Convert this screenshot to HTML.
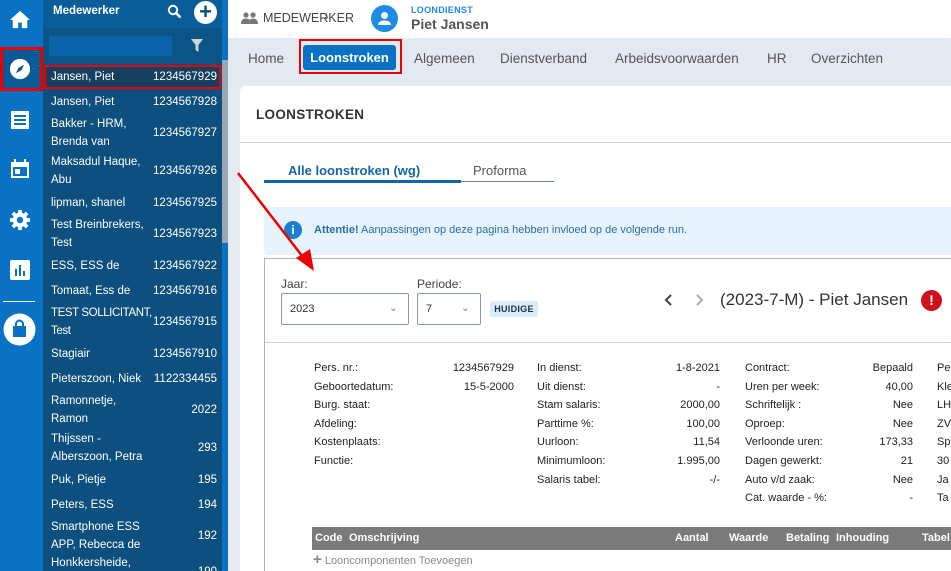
<!DOCTYPE html>
<html><head><meta charset="utf-8"><style>
*{margin:0;padding:0;box-sizing:border-box}
html,body{width:951px;height:571px;overflow:hidden}
body{position:relative;background:#e4ebf2;font-family:"Liberation Sans",sans-serif}
.abs{position:absolute}
#icons{left:0;top:0;width:43px;height:571px;background:#0a72c4}
#list{left:43px;top:0;width:179px;height:571px;background:#0d4f7e;color:#fff;font-size:11.5px}
.nm{position:absolute;left:8px;line-height:18px;white-space:nowrap}
.nr{position:absolute;right:5px;line-height:18px}
#scroll{left:222px;top:0;width:6px;height:571px;background:#0a72c4}
.dl{position:absolute;font-size:11px;color:#222}
.nav{position:absolute;top:51px;font-size:13.5px;color:#555}
</style></head><body>
<div id="icons" class="abs">
 <div class="abs" style="left:0;top:48px;width:43px;height:42px;background:#0b5a98"></div>
 <svg class="abs" style="left:9px;top:9px" width="22" height="20" viewBox="0 0 24 22"><path d="M12 2L1 12h3v9h6v-6h4v6h6v-9h3z" fill="#fff"/></svg>
 <svg class="abs" style="left:9px;top:58px" width="22" height="22" viewBox="0 0 24 24"><circle cx="12" cy="12" r="11" fill="#fff"/><path d="M16.5 7.5l-3 6-6 3 3-6z" fill="#0b5a98"/></svg>
 <svg class="abs" style="left:10px;top:110px" width="20" height="20" viewBox="0 0 20 20"><rect x="1" y="1" width="18" height="18" fill="#fff"/><rect x="4" y="5" width="12" height="2" fill="#0a72c4"/><rect x="4" y="9" width="12" height="2" fill="#0a72c4"/><rect x="4" y="13" width="12" height="2" fill="#0a72c4"/></svg>
 <svg class="abs" style="left:10px;top:159px" width="20" height="20" viewBox="0 0 20 20"><rect x="1" y="3" width="18" height="16" fill="#fff"/><rect x="4" y="0" width="2" height="4" fill="#fff"/><rect x="14" y="0" width="2" height="4" fill="#fff"/><rect x="3" y="8" width="14" height="9" fill="#0a72c4"/><rect x="5" y="10" width="5" height="5" fill="#fff"/></svg>
 <svg class="abs" style="left:9px;top:209px" width="22" height="22" viewBox="0 0 24 24"><circle cx="12" cy="12" r="8" fill="#fff"/><g fill="#fff"><rect x="10" y="1" width="4" height="22"/><rect x="1" y="10" width="22" height="4"/><rect x="10" y="1" width="4" height="22" transform="rotate(45 12 12)"/><rect x="10" y="1" width="4" height="22" transform="rotate(-45 12 12)"/></g><circle cx="12" cy="12" r="3.5" fill="#0a72c4"/></svg>
 <svg class="abs" style="left:10px;top:260px" width="20" height="20" viewBox="0 0 20 20"><rect x="0" y="0" width="20" height="20" rx="2" fill="#fff"/><rect x="5" y="9" width="2" height="7" fill="#0a72c4"/><rect x="9" y="5" width="2" height="11" fill="#0a72c4"/><rect x="13" y="11" width="2" height="5" fill="#0a72c4"/></svg>
 <div class="abs" style="left:3px;top:301px;width:32px;height:1px;background:#fff"></div>
 <svg class="abs" style="left:3px;top:313px" width="33" height="33" viewBox="0 0 33 33"><circle cx="16.5" cy="16.5" r="16" fill="#fff"/><path d="M10 13h13v11H10z" fill="#0a72c4"/><path d="M13 13v-2a3.5 3.5 0 0 1 7 0v2" stroke="#0a72c4" stroke-width="2" fill="none"/></svg>
 <div class="abs" style="left:0;top:47px;width:43px;height:44px;border:3px solid #e00"></div>
</div>
<div id="list" class="abs">
 <div class="abs" style="left:0;top:0;width:179px;height:28px;background:#0b5d9a"></div>
 <div class="abs" style="left:0;top:28px;width:179px;height:36px;background:#0b5586"></div>
 <div class="abs" style="left:10px;top:5px;font-weight:bold;font-size:11.5px">Medewerker</div>
 <svg class="abs" style="left:124px;top:4px" width="15" height="15" viewBox="0 0 15 15"><circle cx="6" cy="6" r="4.2" stroke="#fff" stroke-width="2" fill="none"/><path d="M9 9l4.5 4.5" stroke="#fff" stroke-width="2.5"/></svg>
 <div class="abs" style="left:151px;top:1px;width:23px;height:23px;border-radius:50%;background:#fff;color:#0b4f7e;font-size:22px;line-height:22px;text-align:center;font-weight:bold">+</div>
 <div class="abs" style="left:6px;top:36px;width:123px;height:20px;background:#0a62a8"></div>
 <svg class="abs" style="left:148px;top:39px" width="12" height="13" viewBox="0 0 12 13"><path d="M0 0h12L7.5 6v7L4.5 11V6z" fill="#c8d4de"/></svg>
 <div class="abs" style="left:1px;top:65px;width:177px;height:24px;background:#173f5f;border:2px solid #e00"></div>
 <div class="nm" style="top:68px">Jansen, Piet</div><div class="nr" style="top:68px">1234567929</div>
 <div class="nm" style="top:93px">Jansen, Piet</div><div class="nr" style="top:93px">1234567928</div>
 <div class="nm" style="top:115px">Bakker - HRM,<br>Brenda van</div><div class="nr" style="top:124px">1234567927</div>
 <div class="nm" style="top:153px">Maksadul Haque,<br>Abu</div><div class="nr" style="top:162px">1234567926</div>
 <div class="nm" style="top:194px">lipman, shanel</div><div class="nr" style="top:194px">1234567925</div>
 <div class="nm" style="top:216px">Test Breinbrekers,<br>Test</div><div class="nr" style="top:225px">1234567923</div>
 <div class="nm" style="top:257px">ESS, ESS de</div><div class="nr" style="top:257px">1234567922</div>
 <div class="nm" style="top:282px">Tomaat, Ess de</div><div class="nr" style="top:282px">1234567916</div>
 <div class="nm" style="top:304px;letter-spacing:-0.4px">TEST SOLLICITANT,<br>Test</div><div class="nr" style="top:313px">1234567915</div>
 <div class="nm" style="top:345px">Stagiair</div><div class="nr" style="top:345px">1234567910</div>
 <div class="nm" style="top:370px">Pieterszoon, Niek</div><div class="nr" style="top:370px">1122334455</div>
 <div class="nm" style="top:392px">Ramonnetje,<br>Ramon</div><div class="nr" style="top:401px">2022</div>
 <div class="nm" style="top:430px">Thijssen -<br>Alberszoon, Petra</div><div class="nr" style="top:439px">293</div>
 <div class="nm" style="top:471px">Puk, Pietje</div><div class="nr" style="top:471px">195</div>
 <div class="nm" style="top:496px">Peters, ESS</div><div class="nr" style="top:496px">194</div>
 <div class="nm" style="top:518px">Smartphone ESS<br>APP, Rebecca de</div><div class="nr" style="top:527px">192</div>
 <div class="nm" style="top:554px">Honkkersheide,</div><div class="nr" style="top:563px">190</div>
</div>
<div id="scroll" class="abs"><div class="abs" style="left:0;top:60px;width:6px;height:183px;background:#9aa8b6"></div></div>

<div class="abs" style="left:228px;top:0;width:723px;height:38px;background:#fff"></div>
<svg class="abs" style="left:241px;top:12px" width="18" height="12" viewBox="0 0 18 12"><circle cx="5" cy="3" r="2.6" fill="#777"/><circle cx="12" cy="3" r="2.6" fill="#777"/><path d="M0 12c0-4 2-5.5 5-5.5s5 1.5 5 5.5zM8 12c0-4 1.5-5.5 4-5.5s5 1.5 5 5.5z" fill="#777"/></svg>
<div class="abs" style="left:263px;top:11px;font-size:12.5px;color:#444">MEDEWERKER</div>
<div class="abs" style="left:324px;top:8px;font-size:14px;color:#666">›</div>
<svg class="abs" style="left:371px;top:5px" width="27" height="27" viewBox="0 0 27 27"><circle cx="13.5" cy="13.5" r="13.5" fill="#1e8be6"/><circle cx="13.5" cy="10.5" r="3.5" fill="#fff"/><path d="M7 20c0-3 3-4.5 6.5-4.5S20 17 20 20z" fill="#fff"/></svg>
<div class="abs" style="left:411px;top:5px;font-size:9px;color:#1e8be6;font-weight:bold;letter-spacing:.3px">LOONDIENST</div>
<div class="abs" style="left:411px;top:16px;font-size:14px;color:#555;font-weight:bold">Piet Jansen</div>

<div class="abs" style="left:228px;top:38px;width:723px;height:48px;background:#e2e9f0"></div>
<div class="nav" style="left:248px">Home</div>
<div class="abs" style="left:299px;top:39px;width:103px;height:35px;border:2px solid #e00"></div>
<div class="abs" style="left:303px;top:45px;width:93px;height:25px;background:#0a72c4;border-radius:3px;color:#fff;font-size:13px;font-weight:bold;text-align:center;line-height:25px">Loonstroken</div>
<div class="nav" style="left:414px">Algemeen</div>
<div class="nav" style="left:500px">Dienstverband</div>
<div class="nav" style="left:615px">Arbeidsvoorwaarden</div>
<div class="nav" style="left:767px">HR</div>
<div class="nav" style="left:811px">Overzichten</div>

<div class="abs" style="left:240px;top:86px;width:711px;height:485px;background:#fff;border-radius:6px 0 0 0"></div>
<div class="abs" style="left:256px;top:107px;font-size:13.5px;font-weight:bold;color:#333;letter-spacing:.3px">LOONSTROKEN</div>
<div class="abs" style="left:240px;top:142px;width:711px;height:1px;background:#c8d2dc"></div>
<div class="abs" style="left:288px;top:163px;font-size:13px;font-weight:bold;color:#1565a8">Alle loonstroken (wg)</div>
<div class="abs" style="left:473px;top:163px;font-size:13px;color:#555">Proforma</div>
<div class="abs" style="left:264px;top:181px;width:290px;height:1px;background:#6b8599"></div>
<div class="abs" style="left:264px;top:180px;width:197px;height:3px;background:#1565a8"></div>

<div class="abs" style="left:264px;top:207px;width:687px;height:48px;background:#e6f3fc;border-radius:4px 0 0 4px"></div>
<div class="abs" style="left:284px;top:221px;width:18px;height:18px;border-radius:50%;background:#1a7fd0;color:#fff;font-size:12px;font-weight:bold;text-align:center;line-height:18px">i</div>
<div class="abs" style="left:314px;top:224px;font-size:11px;color:#2a6ea8"><b>Attentie!</b> Aanpassingen op deze pagina hebben invloed op de volgende run.</div>

<div class="abs" style="left:264px;top:258px;width:690px;height:320px;border:1px solid #a7b3c0"></div>
<div class="abs" style="left:281px;top:277px;font-size:12px;color:#444">Jaar:</div>
<div class="abs" style="left:417px;top:277px;font-size:12px;color:#444">Periode:</div>
<div class="abs" style="left:281px;top:293px;width:128px;height:32px;border:1px solid #8a98a8;border-radius:2px;font-size:11px;color:#333;padding:9px 0 0 8px">2023<span style="position:absolute;right:10px;top:7px;color:#888">⌄</span></div>
<div class="abs" style="left:417px;top:293px;width:64px;height:32px;border:1px solid #8a98a8;border-radius:2px;font-size:11px;color:#333;padding:9px 0 0 8px">7<span style="position:absolute;right:10px;top:7px;color:#888">⌄</span></div>
<div class="abs" style="left:490px;top:301px;width:48px;height:16px;background:#d9ecf9;border-radius:2px;font-size:9px;font-weight:bold;color:#234;text-align:center;line-height:16px;letter-spacing:.3px">HUIDIGE</div>
<svg class="abs" style="left:663px;top:293px" width="10" height="14" viewBox="0 0 10 14"><path d="M8 2L3 7l5 5" stroke="#444" stroke-width="2" fill="none"/></svg>
<svg class="abs" style="left:695px;top:293px" width="10" height="14" viewBox="0 0 10 14"><path d="M2 2l5 5-5 5" stroke="#aab" stroke-width="2" fill="none"/></svg>
<div class="abs" style="left:720px;top:290px;font-size:17px;color:#333">(2023-7-M) - Piet Jansen</div>
<div class="abs" style="left:921px;top:290px;width:21px;height:21px;border-radius:50%;background:#d0101e;color:#fff;font-size:14px;font-weight:bold;text-align:center;line-height:21px">!</div>
<div class="abs" style="left:265px;top:342px;width:688px;height:1px;background:#c8d2dc"></div>

<div class="dl" style="left:314px;top:359px;line-height:18.6px">Pers. nr.:<br>Geboortedatum:<br>Burg. staat:<br>Afdeling:<br>Kostenplaats:<br>Functie:</div>
<div class="dl" style="left:414px;width:100px;text-align:right;top:359px;line-height:18.6px">1234567929<br>15-5-2000</div>
<div class="dl" style="left:537px;top:359px;line-height:18.6px">In dienst:<br>Uit dienst:<br>Stam salaris:<br>Parttime %:<br>Uurloon:<br>Minimumloon:<br>Salaris tabel:</div>
<div class="dl" style="left:620px;width:100px;text-align:right;top:359px;line-height:18.6px">1-8-2021<br>-<br>2000,00<br>100,00<br>11,54<br>1.995,00<br>-/-</div>
<div class="dl" style="left:745px;top:359px;line-height:18.6px">Contract:<br>Uren per week:<br>Schriftelijk :<br>Oproep:<br>Verloonde uren:<br>Dagen gewerkt:<br>Auto v/d zaak:<br>Cat. waarde - %:</div>
<div class="dl" style="left:813px;width:100px;text-align:right;top:359px;line-height:18.6px">Bepaald<br>40,00<br>Nee<br>Nee<br>173,33<br>21<br>Nee<br>-</div>
<div class="dl" style="left:937px;top:359px;line-height:18.6px">Pe<br>Kle<br>LH<br>ZV<br>Sp<br>30<br>Ja<br>Ta</div>

<div class="abs" style="left:312px;top:527px;width:639px;height:23px;background:#7a7a7a;color:#fff;font-size:11px;font-weight:bold;line-height:23px">
 <span class="abs" style="left:3px">Code</span><span class="abs" style="left:37px">Omschrijving</span><span class="abs" style="left:363px">Aantal</span><span class="abs" style="left:417px">Waarde</span><span class="abs" style="left:474px">Betaling</span><span class="abs" style="left:524px">Inhouding</span><span class="abs" style="left:610px">Tabel</span>
</div>
<div class="abs" style="left:313px;top:554px;font-size:11px;color:#888"><b style="font-size:15px;color:#888;line-height:11px">+</b> Looncomponenten Toevoegen</div>

<svg class="abs" style="left:230px;top:165px" width="100" height="110" viewBox="0 0 100 110"><path d="M8 8L76 96" stroke="#e00" stroke-width="2.5"/><path d="M84 106L66 93l14-9z" fill="#e00"/></svg>
</body></html>
